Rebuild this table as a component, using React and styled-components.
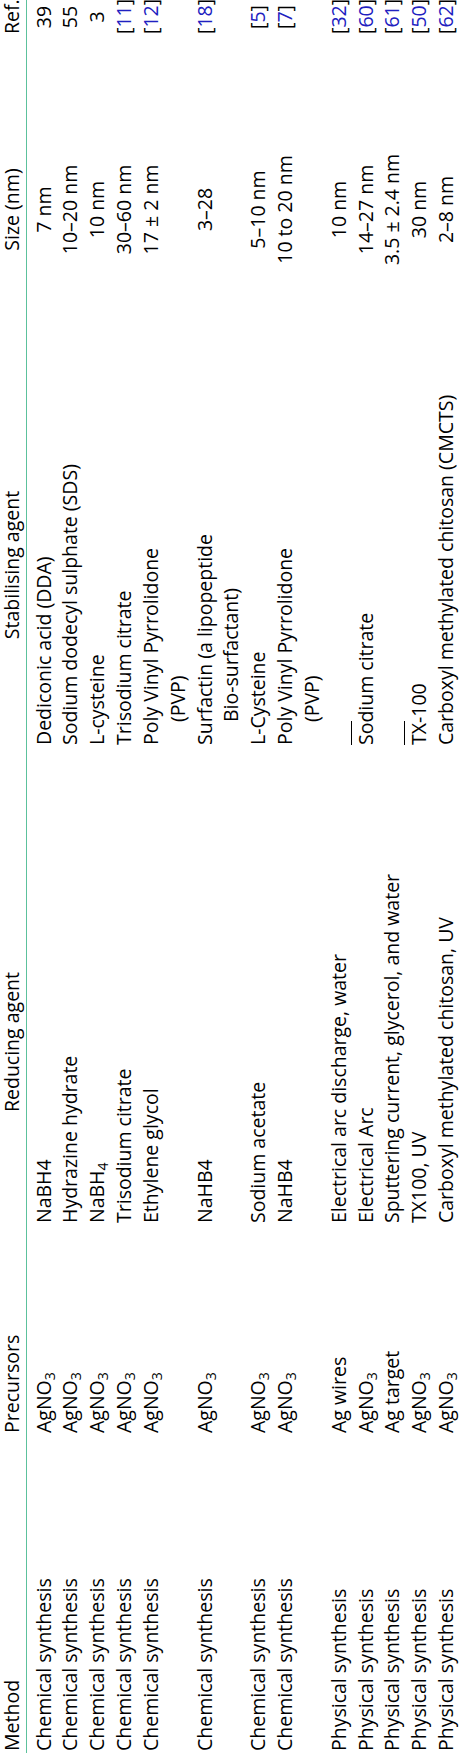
import React from "react";
import styled, { createGlobalStyle, css } from "styled-components";

const GlobalStyle = createGlobalStyle`
  html, body {
    margin: 0;
    padding: 0;
    background: #fff;
  }
  body {
    font-family: "Open Sans", "Noto Sans", sans-serif;
    color: #000;
  }
`;

const rows = [
  { method: "Chemical synthesis", pre: "ag", red: "NaBH4", stab: ["Dediconic acid (DDA)"], size: "7 nm", ref: "39", plain: true },
  { method: "Chemical synthesis", pre: "ag", red: "Hydrazine hydrate", stab: ["Sodium dodecyl sulphate (SDS)"], size: "10–20 nm", ref: "55", plain: true },
  { method: "Chemical synthesis", pre: "ag", red: "nabh4sub", stab: ["L-cysteine"], size: "10 nm", ref: "3", plain: true },
  { method: "Chemical synthesis", pre: "ag", red: "Trisodium citrate", stab: ["Trisodium citrate"], size: "30–60 nm", ref: "11" },
  { method: "Chemical synthesis", pre: "ag", red: "Ethylene glycol", stab: ["Poly Vinyl Pyrrolidone", "(PVP)"], size: "17 ± 2 nm", ref: "12" },
  { method: "Chemical synthesis", pre: "ag", red: "NaHB4", stab: ["Surfactin (a lipopeptide", "Bio-surfactant)"], size: "3–28", ref: "18" },
  { method: "Chemical synthesis", pre: "ag", red: "Sodium acetate", stab: ["L-Cysteine"], size: "5–10 nm", ref: "5" },
  { method: "Chemical synthesis", pre: "ag", red: "NaHB4", stab: ["Poly Vinyl Pyrrolidone", "(PVP)"], size: "10 to 20 nm", ref: "7" },
  { method: "Physical synthesis", pre: "Ag wires", red: "Electrical arc discharge, water", stab: null, size: "10 nm", ref: "32" },
  { method: "Physical synthesis", pre: "ag", red: "Electrical Arc", stab: ["Sodium citrate"], size: "14–27 nm", ref: "60" },
  { method: "Physical synthesis", pre: "Ag target", red: "Sputtering current, glycerol, and water", stab: null, size: "3.5 ± 2.4 nm", ref: "61" },
  { method: "Physical synthesis", pre: "ag", red: "TX100, UV", stab: ["TX-100"], size: "30 nm", ref: "50" },
  { method: "Physical synthesis", pre: "ag", red: "Carboxyl methylated chitosan, UV", stab: ["Carboxyl methylated chitosan (CMCTS)"], size: "2–8 nm", ref: "62" },
];

function Formula({ base, sub }) {
  return (
    <>
      {base}
      <Sub>{sub}</Sub>
    </>
  );
}

export default function App() {
  return (
    <>
      <GlobalStyle />
      <Page>
        <Table>
          <Head>
            <Th>Method</Th>
            <Th>Precursors</Th>
            <Th $center $padRight={116}>Reducing agent</Th>
            <Th $center>Stabilising agent</Th>
            <Th $center>Size (nm)</Th>
            <Th $center>Ref.</Th>
          </Head>
          <Body>
            {rows.map((r, i) => (
              <React.Fragment key={i}>
                <Td>{r.method}</Td>
                <Td>{r.pre === "ag" ? <Formula base="AgNO" sub="3" /> : r.pre}</Td>
                <Td>
                  {r.red === "nabh4sub" ? <Formula base="NaBH" sub="4" /> : r.red}
                </Td>
                <Td $hanging>
                  {r.stab ? (
                    r.stab.map((line, j) => (
                      <React.Fragment key={j}>
                        {j > 0 && <br />}
                        {line}
                      </React.Fragment>
                    ))
                  ) : (
                    <Dash />
                  )}
                </Td>
                <Td $center>{r.size}</Td>
                <Td $center>
                  {r.plain ? (
                    r.ref
                  ) : (
                    <>
                      [<RefNum>{r.ref}</RefNum>]
                    </>
                  )}
                </Td>
              </React.Fragment>
            ))}
          </Body>
        </Table>
      </Page>
    </>
  );
}

const Page = styled.div`
  width: 467px;
  height: 1753px;
  overflow: hidden;
`;

// table is laid out in its reading direction and turned a quarter turn
const Table = styled.div`
  width: 1753px;
  height: 467px;
  transform-origin: 0 0;
  transform: translateY(1753px) rotate(-90deg);
  font-size: 19.5px;
`;

const columns = css`
  display: grid;
  grid-template-columns: 318px 210px 478px 360px 351px 34px;
  padding-left: 2px;
`;

const Head = styled.div`
  ${columns};
  height: 26px;
  border-bottom: 1.5px solid #5cc19c;
`;

const Body = styled.div`
  ${columns};
  padding-top: 3.5px;
  line-height: 26.85px;
`;

const Th = styled.div`
  line-height: 24px;
  white-space: nowrap;
  text-align: ${(p) => (p.$center ? "center" : "left")};
  padding-right: ${(p) => p.$padRight || 0}px;
`;

const Td = styled.div`
  white-space: nowrap;
  text-align: ${(p) => (p.$center ? "center" : "left")};
  ${(p) =>
    p.$hanging &&
    css`
      padding-left: 23px;
      text-indent: -23px;
    `}
`;

const Sub = styled.sub`
  font-size: 0.72em;
  line-height: 0;
  vertical-align: -0.28em;
`;

const RefNum = styled.span`
  color: #2020c0;
`;

const Dash = styled.span`
  display: inline-block;
  width: 24px;
  border-top: 1.4px solid #000;
  vertical-align: -6px;
`;
